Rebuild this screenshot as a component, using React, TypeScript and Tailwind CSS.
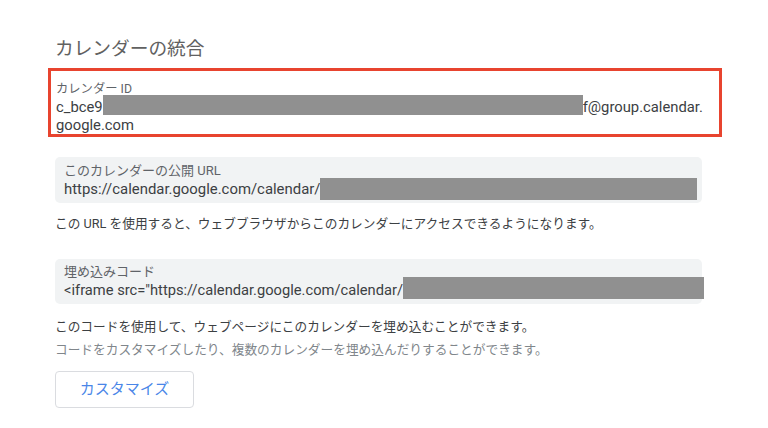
const Redact = ({ w, h, className = "" }: { w: string; h: string; className?: string }) => (
  <div className={`${w} ${h} shrink-0 bg-[#909090] ${className}`} />
);

const App = () => (
  <div className="w-[768px] h-[428px] overflow-hidden bg-white pl-[55px] pt-[37px] font-['Roboto','Noto_Sans_CJK_JP',sans-serif] text-[#3c4043]">
    <h2 className="text-[18.7px] leading-[24px] text-[#616161]">カレンダーの統合</h2>

    {/* Calendar ID (highlighted) */}
    <div className="-ml-[7px] mt-[7px] w-[674px] border-[3px] border-[#e8442f] pl-[5px] pt-[10px]">
      <div className="text-[12.3px] leading-[17px] text-[#5f6368]">カレンダー ID</div>
      <div className="flex h-[18px] items-center text-[14.8px] leading-[18px]">
        <span>c_bce9</span>
        <Redact w="w-[480px]" h="h-[20px]" className="relative -top-[2px]" />
        <span>f@group.calendar.</span>
      </div>
      <div className="text-[14.8px] leading-[18px]">google.com</div>
    </div>

    {/* Public URL */}
    <div className="mt-[20px] w-[647px] rounded-[5px] bg-[#f1f3f4] px-[9px] pt-[6px] pb-[4px]">
      <div className="text-[13px] leading-[16px] text-[#5f6368]">このカレンダーの公開 URL</div>
      <div className="flex h-[20px] items-center text-[14.9px] leading-[20px]">
        <span className="whitespace-nowrap">https://calendar.google.com/calendar/</span>
        <Redact w="w-[377px]" h="h-[22px]" />
      </div>
    </div>
    <p className="mt-[11px] text-[12.7px] leading-[20px]">
      この URL を使用すると、ウェブブラウザからこのカレンダーにアクセスできるようになります。
    </p>

    {/* Embed code */}
    <div className="mt-[25px] w-[647px] rounded-[5px] bg-[#f1f3f4] px-[9px] pt-[5px] pb-[4px]">
      <div className="text-[13px] leading-[16px] text-[#5f6368]">埋め込みコード</div>
      <div className="flex h-[20px] items-center text-[14.7px] leading-[20px]">
        <span className="whitespace-nowrap">&lt;iframe src="https://calendar.google.com/calendar/</span>
        <Redact w="w-[301px]" h="h-[22px]" className="relative -top-[2px]" />
      </div>
    </div>
    <p className="mt-[11px] text-[12.7px] leading-[23px]">
      このコードを使用して、ウェブページにこのカレンダーを埋め込むことができます。
    </p>
    <p className="text-[12.7px] leading-[23px] text-[#80868b]">
      コードをカスタマイズしたり、複数のカレンダーを埋め込んだりすることができます。
    </p>

    <button className="mt-[10px] h-[37px] w-[139px] rounded-[4px] border border-[#dadce0] bg-white text-[15px] text-[#4a86e8]">
      カスタマイズ
    </button>
  </div>
);

export default App;
